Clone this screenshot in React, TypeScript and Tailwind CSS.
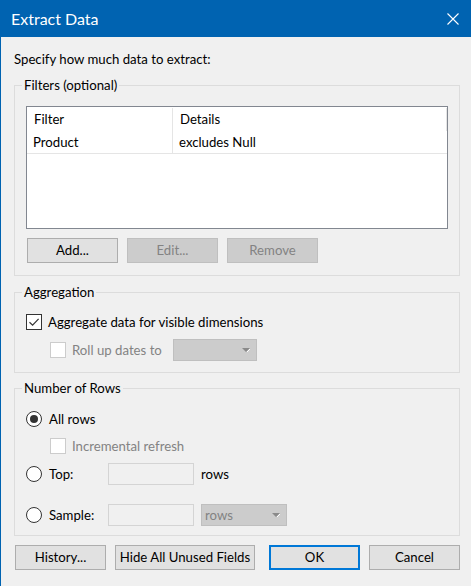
import * as React from "react";

// Windows-style "Extract Data" dialog

function CheckBox({ checked = false, disabled = false }: { checked?: boolean; disabled?: boolean }) {
  return (
    <span
      className={`flex h-[16px] w-[16px] shrink-0 items-center justify-center border bg-white ${
        disabled ? "border-[#cccccc]" : "border-[#333333]"
      }`}
    >
      {checked && (
        <svg width="12" height="12" viewBox="0 0 12 12">
          <path d="M1.5 6.2 L4.6 9.2 L10.6 2.8" fill="none" stroke="#333333" strokeWidth="1.2" />
        </svg>
      )}
    </span>
  );
}

function Radio({ checked = false }: { checked?: boolean }) {
  return (
    <span className="flex h-[16px] w-[16px] shrink-0 items-center justify-center rounded-full border border-[#333333] bg-white">
      {checked && <span className="h-[8px] w-[8px] rounded-full bg-[#333333]" />}
    </span>
  );
}

function DialogButton({
  label,
  disabled = false,
  primary = false,
  className = "",
}: {
  label: string;
  disabled?: boolean;
  primary?: boolean;
  className?: string;
}) {
  const tone = disabled
    ? "border border-[#bfbfbf] bg-[#cccccc] text-[#838383]"
    : primary
      ? "border-2 border-[#0078d7] bg-[#e1e1e1] text-black"
      : "border border-[#adadad] bg-[#e1e1e1] text-black";
  return (
    <button className={`flex h-[25px] items-center justify-center whitespace-nowrap pt-[1px] leading-none ${tone} ${className}`}>
      {label}
    </button>
  );
}

function DisabledSelect({ value = "", className = "" }: { value?: string; className?: string }) {
  return (
    <div
      className={`flex h-[22px] items-center justify-between border border-[#bfbfbf] bg-[#cccccc] pl-[3px] pr-[6px] text-[#838383] ${className}`}
    >
      <span className="pt-[1px]">{value}</span>
      <svg width="8" height="5" viewBox="0 0 8 5">
        <path d="M0 0 H8 L4 4 Z" fill="#8a8a8a" />
        <path d="M5 4 L8 1" stroke="#ffffff" strokeWidth="1" />
      </svg>
    </div>
  );
}

function GroupBox({ title, className = "", children }: { title: string; className?: string; children: React.ReactNode }) {
  return (
    <fieldset className={`border border-[#dcdcdc] px-[11px] ${className}`}>
      <legend className="-ml-[4px] px-[2px] leading-[18px]">{title}</legend>
      {children}
    </fieldset>
  );
}

export default function App() {
  return (
    <div className="h-[586px] w-[471px] overflow-hidden border-l border-[#0063b1] bg-[#f0f0f0] font-['Lato',sans-serif] text-[13.2px] text-black">
      <div className="flex h-[37px] items-center justify-between bg-[#0063b1] pl-[10px] pr-[12px] text-white">
        <span className="text-[16px]">Extract Data</span>
        <svg width="12" height="12" viewBox="0 0 12 12">
          <path d="M0.5 0.5 L11.5 11.5 M11.5 0.5 L0.5 11.5" stroke="#ffffff" strokeWidth="1.1" />
        </svg>
      </div>

      <div className="pl-[13px] pr-[11px]">
        <p className="mt-[12px] leading-[20px]">Specify how much data to extract:</p>

        <GroupBox title="Filters (optional)" className="mt-[7px] pt-[12px] pb-[12px]">
          <div className="h-[123px] border border-[#828790] bg-white">
            <div className="flex h-[24px] items-center pt-[1px]">
              <span className="flex h-full w-[146px] items-center border-r border-[#e5e5e5] pl-[7px]">Filter</span>
              <span className="flex h-full flex-1 items-center border-r border-[#e5e5e5] pl-[7px]">Details</span>
            </div>
            <div className="flex h-[23px] items-center border-b border-[#e5e5e5]">
              <span className="flex h-full w-[146px] items-center border-r border-[#e5e5e5] pt-[2px] pl-[6px]">Product</span>
              <span className="flex h-full flex-1 items-center pt-[2px] pl-[6px]">excludes Null</span>
            </div>
          </div>
          <div className="mt-[9px] flex gap-[9px] pl-[1px]">
            <DialogButton label="Add..." className="w-[91px]" />
            <DialogButton label="Edit..." disabled className="w-[91px]" />
            <DialogButton label="Remove" disabled className="w-[91px]" />
          </div>
        </GroupBox>

        <GroupBox title="Aggregation" className="mt-[7px] pt-[11px] pb-[11px]">
          <div className="flex h-[20px] items-center gap-[6px]">
            <CheckBox checked />
            <span className="pt-[1px]">Aggregate data for visible dimensions</span>
          </div>
          <div className="mt-[7px] flex h-[22px] items-center pl-[24px]">
            <div className="flex w-[123px] items-center gap-[6px]">
              <CheckBox disabled />
              <span className="pt-[1px] text-[#838383]">Roll up dates to</span>
            </div>
            <DisabledSelect className="w-[84px]" />
          </div>
        </GroupBox>

        <GroupBox title="Number of Rows" className="mt-[6px] pt-[12px] pb-[9px]">
          <div className="flex h-[20px] items-center gap-[7px]">
            <Radio checked />
            <span className="pt-[1px]">All rows</span>
          </div>
          <div className="mt-[7px] flex h-[20px] items-center gap-[6px] pl-[24px]">
            <CheckBox disabled />
            <span className="pt-[1px] text-[#838383]">Incremental refresh</span>
          </div>
          <div className="mt-[7px] flex h-[22px] items-center">
            <div className="flex w-[82px] items-center gap-[7px]">
              <Radio />
              <span className="pt-[1px]">Top:</span>
            </div>
            <div className="h-[22px] w-[86px] border border-[#d4d4d4] bg-[#f0f0f0]" />
            <span className="ml-[7px] pt-[1px]">rows</span>
          </div>
          <div className="mt-[19px] flex h-[22px] items-center">
            <div className="flex w-[82px] items-center gap-[7px]">
              <Radio />
              <span className="pt-[1px]">Sample:</span>
            </div>
            <div className="h-[22px] w-[86px] border border-[#d4d4d4] bg-[#f0f0f0]" />
            <DisabledSelect value="rows" className="ml-[7px] w-[86px]" />
          </div>
        </GroupBox>

        <div className="mt-[9px] flex pl-[1px]">
          <DialogButton label="History..." className="w-[91px]" />
          <DialogButton label="Hide All Unused Fields" className="ml-[9px] w-[140px]" />
          <DialogButton label="OK" primary className="ml-auto w-[91px]" />
          <DialogButton label="Cancel" className="ml-[9px] w-[91px]" />
        </div>
      </div>
    </div>
  );
}
